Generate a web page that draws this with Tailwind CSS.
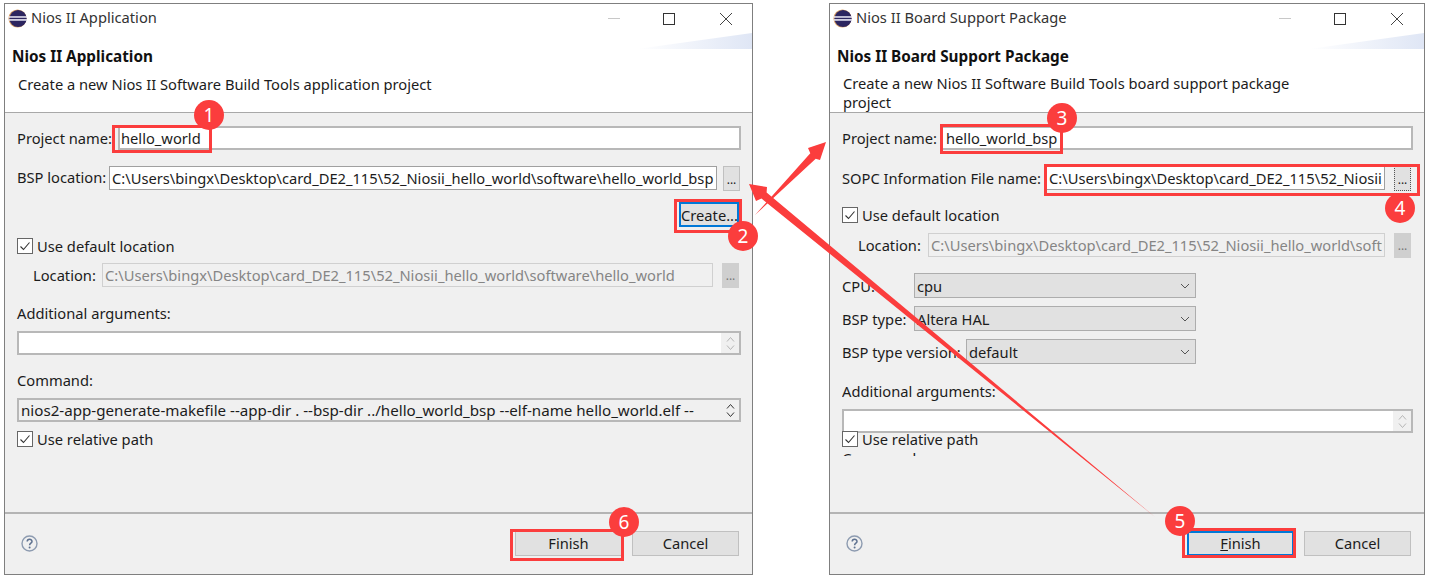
<!DOCTYPE html>
<html lang="en">

<head>
    <meta charset="UTF-8">
    <title>Nios II wizards</title>
    <script src="https://cdn.jsdelivr.net/npm/@tailwindcss/browser@4"></script>
</head>

<body class="bg-white">
    <div class="relative w-[1429px] h-[579px] overflow-hidden font-['Noto_Sans',sans-serif] text-[14.7px] leading-[20px] text-[#1c1c1c]">
        <div class="flex gap-[76px] pt-[3px] pl-[4px]">

            <!-- LEFT WINDOW -->
            <section class="w-[749px] h-[572px] border border-[#7f7f7f] bg-[#f0f0f0] flex flex-col">
                <div class="h-[29px] bg-white flex items-center pl-[3px] shrink-0">
                    <svg class="w-[19px] h-[19px]" viewBox="0 0 20 20"><circle cx="10" cy="10" r="9.5" fill="#d9a066"/><circle cx="10.6" cy="10" r="9" fill="#2c2560"/><rect x="1" y="7.6" width="19" height="1.6" fill="#e8e6f2"/><rect x="1" y="10.6" width="19" height="1.8" fill="#dcdaea"/></svg>
                    <span class="ml-[4px] mb-[3px] text-[#333]">Nios II Application</span>
                    <div class="ml-auto flex items-center">
                        <div class="w-[12px] h-px bg-[#c8c8c8] mr-[43px]"></div>
                        <div class="w-[12px] h-[12px] border border-[#333] mr-[44px]"></div>
                        <svg class="w-[14px] h-[14px] mr-[19px]" viewBox="0 0 14 14" fill="none" stroke="#444"><path d="M1 1l12 12M13 1L1 13"/></svg>
                    </div>
                </div>
                <div class="relative h-[80px] bg-white border-b border-[#a8a8a8] shrink-0 pl-[7px] pt-[13px]">
                    <div class="absolute right-0 top-0 w-[115px] h-[16px] bg-gradient-to-r from-white to-[#dfe6f5] [clip-path:polygon(0_100%,100%_0,100%_100%)]"></div>
                    <h2 class="font-bold text-[15.3px] text-[#111]">Nios II Application</h2>
                    <p class="ml-[6px] mt-[8px]">Create a new Nios II Software Build Tools application project</p>
                </div>
                <div class="flex-1 pl-[12px] pr-[11px] pt-[13px]">
                    <div class="flex items-center h-[24px]">
                        <label class="w-[101px]">Project name:</label>
                        <input readonly value="hello_world" class="flex-1 h-full bg-white border-2 border-[#b8b8b8] pl-[1px] outline-none">
                    </div>
                    <div class="flex items-center h-[24px] mt-[16px]">
                        <label class="w-[92px] mb-[3px]">BSP location:</label>
                        <input readonly value="C:\Users\bingx\Desktop\card_DE2_115\52_Niosii_hello_world\software\hello_world_bsp" class="w-[608px] h-full bg-white border border-[#a0a0a0] px-[2px] outline-none">
                        <button class="w-[17px] h-[25px] ml-[6px] bg-[#e1e1e1] border border-[#c0c0c0] text-[12px] leading-[26px]">...</button>
                    </div>
                    <div class="flex justify-end mt-[12px] pr-[2px]">
                        <button class="w-[60px] h-[25px] bg-[#e1e1e1] border-2 border-[#0078d7] leading-[20px]">Create...</button>
                    </div>
                    <div class="flex items-center gap-[4px] mt-[10px] h-[18px]">
                        <svg class="w-[16px] h-[16px]" viewBox="0 0 16 16"><rect x=".5" y=".5" width="15" height="15" fill="#fff" stroke="#666"/><path d="M3.5 8.5l3 3 6-7" fill="none" stroke="#333" stroke-width="1.1"/></svg>
                        <span>Use default location</span>
                    </div>
                    <div class="flex items-center h-[24px] mt-[8px]">
                        <label class="w-[85px] pl-[16px]">Location:</label>
                        <input readonly value="C:\Users\bingx\Desktop\card_DE2_115\52_Niosii_hello_world\software\hello_world" class="w-[611px] h-full bg-[#f0f0f0] border border-[#d0d0d0] px-[2px] text-[#858585] outline-none">
                        <button class="w-[17px] h-[25px] ml-[9px] bg-[#cfcfcf] text-[#777] text-[12px] leading-[26px]">...</button>
                    </div>
                    <p class="mt-[16px]">Additional arguments:</p>
                    <div class="relative h-[24px] mt-[8px] bg-white border-2 border-[#b8b8b8]">
                        <div class="absolute right-0 top-0 bottom-0 w-[18px] bg-[#f0f0f0] flex flex-col items-center justify-center gap-[3px]">
                            <svg class="w-[9px] h-[5px]" viewBox="0 0 9 5" fill="none" stroke="#b5b5b5"><path d="M1 4.5l3.5-4 3.5 4"/></svg>
                            <svg class="w-[9px] h-[5px]" viewBox="0 0 9 5" fill="none" stroke="#b5b5b5"><path d="M1 .5l3.5 4 3.5-4"/></svg>
                        </div>
                    </div>
                    <p class="mt-[15px]">Command:</p>
                    <div class="relative h-[24px] mt-[8px] bg-[#f0f0f0] border-2 border-[#b8b8b8] pl-[2px] text-[15.15px] leading-[20px] whitespace-nowrap overflow-hidden">
                        nios2-app-generate-makefile --app-dir . --bsp-dir ../hello_world_bsp --elf-name hello_world.elf --
                        <div class="absolute right-0 top-0 bottom-0 w-[18px] bg-[#f0f0f0] flex flex-col items-center justify-center gap-[3px]">
                            <svg class="w-[9px] h-[5px]" viewBox="0 0 9 5" fill="none" stroke="#333"><path d="M1 4.5l3.5-4 3.5 4"/></svg>
                            <svg class="w-[9px] h-[5px]" viewBox="0 0 9 5" fill="none" stroke="#333"><path d="M1 .5l3.5 4 3.5-4"/></svg>
                        </div>
                    </div>
                    <div class="flex items-center gap-[4px] mt-[8px] h-[18px]">
                        <svg class="w-[16px] h-[16px]" viewBox="0 0 16 16"><rect x=".5" y=".5" width="15" height="15" fill="#fff" stroke="#666"/><path d="M3.5 8.5l3 3 6-7" fill="none" stroke="#333" stroke-width="1.1"/></svg>
                        <span>Use relative path</span>
                    </div>
                </div>
                <div class="h-[62px] border-t-2 border-[#b4b4b4] shrink-0 flex items-center pl-[16px] pr-[13px] pb-[2px]">
                    <svg class="w-[17px] h-[17px]" viewBox="0 0 17 17" fill="none"><circle cx="8.5" cy="8.5" r="7.5" stroke="#8d9bb0" stroke-width="1.4"/><path d="M6.2 6.6c0-3 4.8-3 4.8-.2 0 1.8-2.4 1.8-2.4 3.8" stroke="#5f7290" stroke-width="1.5"/><circle cx="8.6" cy="12.5" r="1" fill="#5f7290"/></svg>
                    <button class="ml-auto w-[107px] h-[25px] bg-[#e1e1e1] border border-[#c0c0c0]">Finish</button>
                    <button class="ml-[10px] w-[107px] h-[25px] bg-[#e1e1e1] border border-[#c0c0c0]">Cancel</button>
                </div>
            </section>

            <!-- RIGHT WINDOW -->
            <section class="w-[596px] h-[572px] border border-[#7f7f7f] bg-[#f0f0f0] flex flex-col">
                <div class="h-[29px] bg-white flex items-center pl-[3px] shrink-0">
                    <svg class="w-[19px] h-[19px]" viewBox="0 0 20 20"><circle cx="10" cy="10" r="9.5" fill="#d9a066"/><circle cx="10.6" cy="10" r="9" fill="#2c2560"/><rect x="1" y="7.6" width="19" height="1.6" fill="#e8e6f2"/><rect x="1" y="10.6" width="19" height="1.8" fill="#dcdaea"/></svg>
                    <span class="ml-[4px] mb-[3px] text-[#333]">Nios II Board Support Package</span>
                    <div class="ml-auto flex items-center">
                        <div class="w-[12px] h-px bg-[#c8c8c8] mr-[43px]"></div>
                        <div class="w-[12px] h-[12px] border border-[#333] mr-[44px]"></div>
                        <svg class="w-[14px] h-[14px] mr-[20px]" viewBox="0 0 14 14" fill="none" stroke="#444"><path d="M1 1l12 12M13 1L1 13"/></svg>
                    </div>
                </div>
                <div class="relative h-[80px] bg-white border-b border-[#a8a8a8] shrink-0 pl-[7px] pt-[13px]">
                    <div class="absolute right-0 top-0 w-[115px] h-[16px] bg-gradient-to-r from-white to-[#dfe6f5] [clip-path:polygon(0_100%,100%_0,100%_100%)]"></div>
                    <h2 class="font-bold text-[15.3px] text-[#111]">Nios II Board Support Package</h2>
                    <p class="ml-[6px] mt-[8px] w-[470px] leading-[19px]">Create a new Nios II Software Build Tools board support package project</p>
                </div>
                <div class="flex-1 pl-[12px] pr-[11px] pt-[13px] overflow-hidden">
                    <div class="h-[330px] overflow-hidden">
                        <div class="flex items-center h-[24px]">
                            <label class="w-[99px]">Project name:</label>
                            <input readonly value="hello_world_bsp" class="flex-1 h-full bg-white border-2 border-[#b8b8b8] px-[3px] outline-none">
                        </div>
                        <div class="flex items-center h-[24px] mt-[16px]">
                            <label class="w-[204px]">SOPC Information File name:</label>
                            <input readonly value="C:\Users\bingx\Desktop\card_DE2_115\52_Niosii_hello_world\software\hello_world\hello_world.sopcinfo" class="w-[339px] h-full bg-white border border-[#a0a0a0] px-[2px] outline-none">
                            <button class="w-[17px] h-[25px] ml-[9px] bg-[#e1e1e1] border border-dotted border-[#555] text-[12px] leading-[26px]">...</button>
                        </div>
                        <div class="flex items-center gap-[4px] mt-[16px] h-[18px]">
                            <svg class="w-[16px] h-[16px]" viewBox="0 0 16 16"><rect x=".5" y=".5" width="15" height="15" fill="#fff" stroke="#666"/><path d="M3.5 8.5l3 3 6-7" fill="none" stroke="#333" stroke-width="1.1"/></svg>
                            <span>Use default location</span>
                        </div>
                        <div class="flex items-center h-[24px] mt-[9px]">
                            <label class="w-[86px] pl-[16px]">Location:</label>
                            <input readonly value="C:\Users\bingx\Desktop\card_DE2_115\52_Niosii_hello_world\software\hello_world" class="w-[457px] h-full bg-[#f0f0f0] border border-[#d0d0d0] px-[2px] text-[#858585] outline-none">
                            <button class="w-[17px] h-[25px] ml-[9px] bg-[#cfcfcf] text-[#777] text-[12px] leading-[26px]">...</button>
                        </div>
                        <div class="flex items-center h-[25px] mt-[16px]">
                            <label class="w-[72px]">CPU:</label>
                            <div class="w-[282px] h-full bg-[#e1e1e1] border border-[#adadad] flex items-center pl-[2px]">cpu
                                <svg class="ml-auto mr-[5px] w-[10px] h-[6px]" viewBox="0 0 10 6" fill="none" stroke="#555"><path d="M1 1l4 4 4-4"/></svg>
                            </div>
                        </div>
                        <div class="flex items-center h-[25px] mt-[8px]">
                            <label class="w-[72px]">BSP type:</label>
                            <div class="w-[282px] h-full bg-[#e1e1e1] border border-[#adadad] flex items-center pl-[2px]">Altera HAL
                                <svg class="ml-auto mr-[5px] w-[10px] h-[6px]" viewBox="0 0 10 6" fill="none" stroke="#555"><path d="M1 1l4 4 4-4"/></svg>
                            </div>
                        </div>
                        <div class="flex items-center h-[25px] mt-[8px]">
                            <label class="w-[124px] whitespace-nowrap">BSP type version:</label>
                            <div class="w-[230px] h-full bg-[#e1e1e1] border border-[#adadad] flex items-center pl-[2px]">default
                                <svg class="ml-auto mr-[5px] w-[10px] h-[6px]" viewBox="0 0 10 6" fill="none" stroke="#555"><path d="M1 1l4 4 4-4"/></svg>
                            </div>
                        </div>
                        <p class="mt-[17px]">Additional arguments:</p>
                        <div class="relative h-[24px] mt-[8px] bg-white border-2 border-[#b8b8b8]">
                            <div class="absolute right-0 top-0 bottom-0 w-[18px] bg-[#f0f0f0] flex flex-col items-center justify-center gap-[3px]">
                                <svg class="w-[9px] h-[5px]" viewBox="0 0 9 5" fill="none" stroke="#b5b5b5"><path d="M1 4.5l3.5-4 3.5 4"/></svg>
                                <svg class="w-[9px] h-[5px]" viewBox="0 0 9 5" fill="none" stroke="#b5b5b5"><path d="M1 .5l3.5 4 3.5-4"/></svg>
                            </div>
                        </div>
                        <div class="relative flex items-center gap-[4px] -mt-[2px] h-[16px]">
                            <svg class="w-[16px] h-[16px]" viewBox="0 0 16 16"><rect x=".5" y=".5" width="15" height="15" fill="#fff" stroke="#666"/><path d="M3.5 8.5l3 3 6-7" fill="none" stroke="#333" stroke-width="1.1"/></svg>
                            <span>Use relative path</span>
                        </div>
                        <p class="mt-[1px] text-[15.15px]">Command:</p>
                    </div>
                </div>
                <div class="h-[62px] border-t-2 border-[#b4b4b4] shrink-0 flex items-center pl-[16px] pr-[13px] pb-[2px]">
                    <svg class="w-[17px] h-[17px]" viewBox="0 0 17 17" fill="none"><circle cx="8.5" cy="8.5" r="7.5" stroke="#8d9bb0" stroke-width="1.4"/><path d="M6.2 6.6c0-3 4.8-3 4.8-.2 0 1.8-2.4 1.8-2.4 3.8" stroke="#5f7290" stroke-width="1.5"/><circle cx="8.6" cy="12.5" r="1" fill="#5f7290"/></svg>
                    <button class="ml-auto w-[107px] h-[25px] bg-[#e1e1e1] border-2 border-[#0078d7]"><u>F</u>inish</button>
                    <button class="ml-[10px] w-[107px] h-[25px] bg-[#e1e1e1] border border-[#c0c0c0]">Cancel</button>
                </div>
            </section>
        </div>

        <!-- arrows -->
        <svg class="absolute inset-0 w-[1429px] h-[579px] pointer-events-none" viewBox="0 0 1429 579">
            <polygon fill="#fb3d3d" points="755,215 810.3,153.3 808,148 826,142 820,160 815.7,158.7"/>
            <polygon fill="#fb3d3d" points="1155,517 766.6,192.6 767,187 749,184 756,201 761.4,198.4"/>
        </svg>

        <!-- red boxes -->
        <div class="absolute left-[112px] top-[125px] w-[100px] h-[28px] border-[3px] border-[#fb3d3d]"></div>
        <div class="absolute left-[674px] top-[199px] w-[68px] h-[34px] border-[3px] border-[#fb3d3d]"></div>
        <div class="absolute left-[940px] top-[124px] w-[123px] h-[30px] border-[3px] border-[#fb3d3d]"></div>
        <div class="absolute left-[1044px] top-[164px] w-[376px] h-[32px] border-[3px] border-[#fb3d3d]"></div>
        <div class="absolute left-[1182px] top-[528px] w-[114px] h-[30px] border-[3px] border-[#fb3d3d]"></div>
        <div class="absolute left-[510px] top-[529px] w-[114px] h-[32px] border-[3px] border-[#fb3d3d]"></div>

        <!-- number badges -->
        <div class="absolute left-[194px] top-[100px] w-[30px] h-[30px] rounded-full bg-[#fb3d3d] text-white text-[19px] leading-[30px] text-center">1</div>
        <div class="absolute left-[728px] top-[221px] w-[30px] h-[30px] rounded-full bg-[#fb3d3d] text-white text-[19px] leading-[30px] text-center">2</div>
        <div class="absolute left-[1047px] top-[103px] w-[30px] h-[30px] rounded-full bg-[#fb3d3d] text-white text-[19px] leading-[30px] text-center">3</div>
        <div class="absolute left-[1385px] top-[193px] w-[30px] h-[30px] rounded-full bg-[#fb3d3d] text-white text-[19px] leading-[30px] text-center">4</div>
        <div class="absolute left-[1165px] top-[506px] w-[30px] h-[30px] rounded-full bg-[#fb3d3d] text-white text-[19px] leading-[30px] text-center">5</div>
        <div class="absolute left-[609px] top-[507px] w-[30px] h-[30px] rounded-full bg-[#fb3d3d] text-white text-[19px] leading-[30px] text-center">6</div>
    </div>
</body>

</html>
